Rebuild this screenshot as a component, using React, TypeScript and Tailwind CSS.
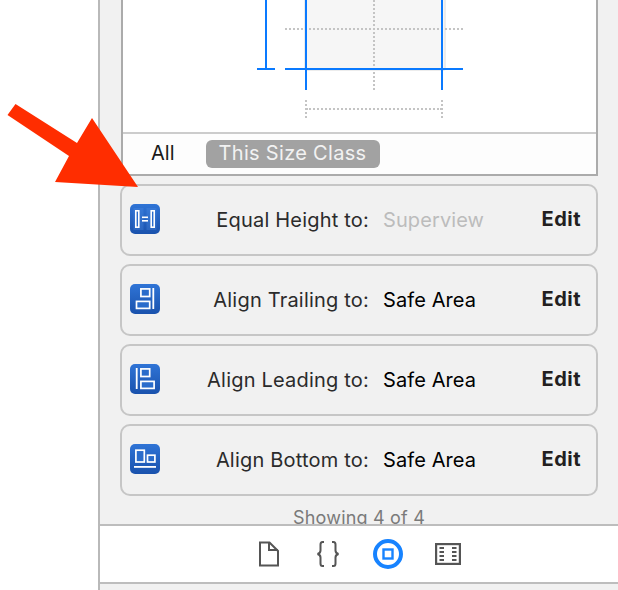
const font = { fontFamily: 'Inter, "Noto Sans", sans-serif' };

function IconFrame({ children }: { children: React.ReactNode }) {
  return (
    <svg width="30" height="30" viewBox="0 0 30 30" className="shrink-0">
      <defs>
        <linearGradient id="tile" x1="0" y1="0" x2="0" y2="1">
          <stop offset="0" stopColor="#2f74d6" />
          <stop offset="1" stopColor="#1a52ad" />
        </linearGradient>
      </defs>
      <rect width="30" height="30" rx="5" fill="url(#tile)" />
      {children}
    </svg>
  );
}

function EqualHeightIcon() {
  return (
    <IconFrame>
      <rect x="3.5" y="4" width="10" height="22" fill="#4f8fe4" opacity="0.3" />
      <rect x="16.5" y="4" width="10" height="22" fill="#4f8fe4" opacity="0.3" />
      <g fill="#2a6ccb" stroke="#fff" strokeWidth="1.6">
        <rect x="5.8" y="6.8" width="3" height="16.4" />
        <rect x="21.2" y="6.8" width="3" height="16.4" />
      </g>
      <rect x="12" y="12.5" width="6" height="1.6" fill="#fff" />
      <rect x="12" y="16" width="6" height="1.6" fill="#fff" />
    </IconFrame>
  );
}

function AlignTrailingIcon() {
  return (
    <IconFrame>
      <rect x="22.4" y="4" width="1.8" height="21" fill="#fff" />
      <g fill="#2a6ccb" stroke="#fff" strokeWidth="1.7">
        <rect x="10.9" y="4.9" width="8.8" height="7.6" />
        <rect x="6.5" y="17.4" width="13.2" height="7" />
      </g>
    </IconFrame>
  );
}

function AlignLeadingIcon() {
  return (
    <IconFrame>
      <rect x="5.8" y="4" width="1.8" height="21" fill="#fff" />
      <g fill="#2a6ccb" stroke="#fff" strokeWidth="1.7">
        <rect x="10.9" y="4.9" width="8.8" height="7.6" />
        <rect x="10.9" y="17.4" width="13.2" height="7" />
      </g>
    </IconFrame>
  );
}

function AlignBottomIcon() {
  return (
    <IconFrame>
      <rect x="4" y="22" width="22" height="1.8" fill="#fff" />
      <g fill="#2a6ccb" stroke="#fff" strokeWidth="1.7">
        <rect x="5.9" y="6.2" width="8.4" height="11.8" />
        <rect x="17.5" y="11.2" width="7.4" height="6.8" />
      </g>
    </IconFrame>
  );
}

const rows = [
  { label: 'Equal Height to:', value: 'Superview', muted: true, icon: <EqualHeightIcon /> },
  { label: 'Align Trailing to:', value: 'Safe Area', muted: false, icon: <AlignTrailingIcon /> },
  { label: 'Align Leading to:', value: 'Safe Area', muted: false, icon: <AlignLeadingIcon /> },
  { label: 'Align Bottom to:', value: 'Safe Area', muted: false, icon: <AlignBottomIcon /> },
];

function ConstraintCanvas() {
  return (
    <div className="relative h-[132px] bg-white">
      <div className="absolute left-[181px] top-0 h-[71px] w-[142px] rounded-b-[3px] border-2 border-t-0 border-[#ececec] bg-[#f6f6f6]" />
      <div className="absolute left-[162px] top-[28px] w-[178px] border-t-2 border-dotted border-[#c4c4c4]" />
      <div className="absolute left-[250px] top-0 h-[90px] border-l-2 border-dotted border-[#c4c4c4]" />
      <div className="absolute left-[183px] top-[108px] w-[136px] border-t-2 border-dotted border-[#c4c4c4]" />
      <div className="absolute left-[182px] top-[100px] h-[18px] border-l-2 border-dotted border-[#c4c4c4]" />
      <div className="absolute left-[318px] top-[100px] h-[18px] border-l-2 border-dotted border-[#c4c4c4]" />
      <div className="absolute left-[142px] top-0 h-[69px] w-[2px] bg-[#0a7aff]" />
      <div className="absolute left-[134px] top-[68px] h-[2px] w-[18px] bg-[#0a7aff]" />
      <div className="absolute left-[162px] top-[68px] h-[2px] w-[178px] bg-[#0a7aff]" />
      <div className="absolute left-[182px] top-0 h-[90px] w-[2px] bg-[#0a7aff]" />
      <div className="absolute left-[318px] top-0 h-[90px] w-[2px] bg-[#0a7aff]" />
    </div>
  );
}

export default function App() {
  return (
    <div className="relative flex h-[590px] w-[618px] overflow-hidden bg-white" style={font}>
      <div className="w-[98px] shrink-0 bg-white" />
      <div className="flex min-w-0 flex-1 flex-col border-l-2 border-[#b9b9b9] bg-[#f1f1f1]">
        <div className="flex h-[524px] flex-col overflow-hidden pl-[20px] pr-[20px]">
          <div className="ml-px flex h-[176px] shrink-0 flex-col border-x-2 border-b-2 border-[#ababab] bg-white">
            <ConstraintCanvas />
            <div className="flex h-[42px] items-center border-t-2 border-[#cccccc] bg-[#fdfdfd]">
              <span className="mb-[2px] ml-[28px] text-[20px] text-[#1a1a1a]">All</span>
              <span className="ml-[31px] flex h-[28px] w-[174px] items-center justify-center rounded-[6px] bg-[#a2a2a2] pb-[2px] text-[20px] tracking-[0.3px] text-[#f2f2f2]">
                This Size Class
              </span>
            </div>
          </div>
          <div className="mt-2 flex flex-col gap-2">
            {rows.map((r) => (
              <div
                key={r.label}
                className="flex h-[72px] items-center rounded-[10px] border-2 border-[#c6c6c6] pb-[2px] pl-2 pr-[15px]"
              >
                {r.icon}
                <span className="mt-[2px] w-[209px] text-right text-[20px] tracking-[0.2px] text-[#2b2b2b]">{r.label}</span>
                <span
                  className={
                    r.muted
                      ? 'ml-[14px] mt-[2px] text-[20px] tracking-[0.1px] text-[#bcbcbc]'
                      : 'ml-[14px] mt-[2px] text-[20px] tracking-[0.1px] text-black'
                  }
                >
                  {r.value}
                </span>
                <span className="ml-auto text-[20px] font-bold tracking-[0.5px] text-[#231f20]">Edit</span>
              </div>
            ))}
          </div>
          <div className="mt-[11px] text-center text-[18px] leading-[22px] tracking-[0.2px] text-[#7a7a7a]">
            Showing 4 of 4
          </div>
        </div>
        <div className="flex h-[60px] shrink-0 items-center border-y-2 border-[#bdbdbd] bg-white pl-[158px]">
          <svg width="22" height="26" viewBox="0 0 22 26" fill="none" stroke="#555" strokeWidth="2">
            <path d="M2 1.5H11.5L20 10V24.5H2Z" />
            <path d="M11 1.5V9H20" />
          </svg>
          <svg width="24" height="28" viewBox="0 0 24 28" fill="none" stroke="#555" strokeWidth="2" className="ml-[36px]">
            <path d="M8 2H6.5C5 2 4.5 3 4.5 4.5V10.5C4.5 12.5 3.5 13.5 1.5 14C3.5 14.5 4.5 15.5 4.5 17.5V23.5C4.5 25 5 26 6.5 26H8" />
            <path d="M16 2H17.5C19 2 19.5 3 19.5 4.5V10.5C19.5 12.5 20.5 13.5 22.5 14C20.5 14.5 19.5 15.5 19.5 17.5V23.5C19.5 25 19 26 17.5 26H16" />
          </svg>
          <svg width="30" height="30" viewBox="0 0 30 30" fill="none" stroke="#1783ff" className="ml-[33px]">
            <circle cx="15" cy="15" r="13" strokeWidth="4" />
            <rect x="10.5" y="10.5" width="9" height="9" strokeWidth="2.4" />
          </svg>
          <svg width="26" height="22" viewBox="0 0 26 22" className="ml-[32px]">
            <rect x="1" y="1" width="24" height="20" fill="none" stroke="#555" strokeWidth="2.4" />
            <path d="M4.5 5H9M4.5 9H9M4.5 13H9M4.5 17H9M17 5H21.5M17 9H21.5M17 13H21.5M17 17H21.5" stroke="#555" strokeWidth="2" />
          </svg>
        </div>
        <div className="flex-1 bg-[#f1f1f1]" />
      </div>
      <svg width="150" height="200" viewBox="0 0 150 200" className="absolute left-0 top-0">
        <polygon points="7.5,115 15.5,104 77,143 92,118 138,187 55,182 69,156" fill="#ff2d00" />
      </svg>
    </div>
  );
}
